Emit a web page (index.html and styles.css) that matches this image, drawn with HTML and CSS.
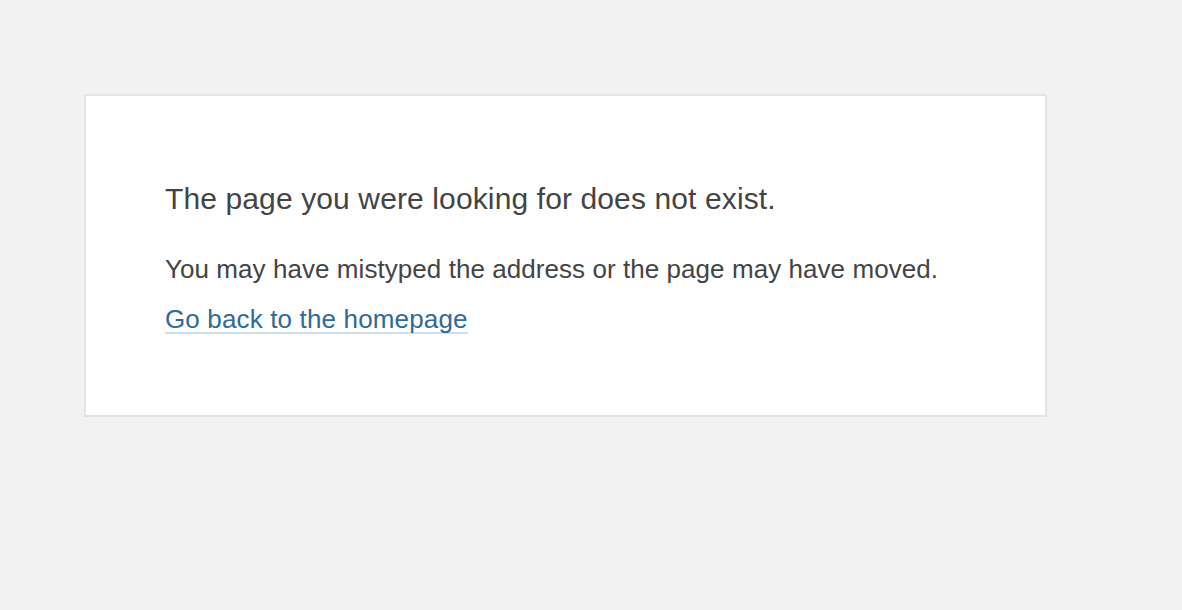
FILE: index.html
```html
<!DOCTYPE html>
<html>
<head>
<meta charset="utf-8">
<link rel="stylesheet" href="styles.css">
</head>
<body>
<div class="page">
  <div class="card">
    <h1 class="title">The page you were looking for does not exist.</h1>
    <p class="lead">You may have mistyped the address or the page may have moved.</p>
    <a class="home" href="#">Go back to the homepage</a>
  </div>
</div>
</body>
</html>
```
FILE: styles.css
```css
html, body {
  margin: 0;
  padding: 0;
  background: #f2f2f2;
  font-family: "Liberation Sans", Arial, sans-serif;
  color: #444;
}
.page {
  padding: 94px 0 0 84px;
}
.card {
  box-sizing: content-box;
  width: 880px;
  height: 319px;
  background: #fff;
  border: 2px solid #e4e4e4;
  padding: 0 0 0 79px;
  display: flex;
  flex-direction: column;
  align-items: flex-start;
}
.title {
  font-size: 30px;
  font-weight: normal;
  letter-spacing: 0.12px;
  margin: 86px 0 0 0;
  line-height: 34px;
  color: #444;
}
.lead {
  font-size: 26px;
  letter-spacing: 0.06px;
  margin: 37px 0 0 0;
  line-height: 32px;
}
.home {
  font-size: 26px;
  letter-spacing: 0.15px;
  line-height: 26px;
  margin-top: 21px;
  color: #2f6a98;
  text-decoration: none;
  border-bottom: 2px solid #cfe0ee;
}
```
